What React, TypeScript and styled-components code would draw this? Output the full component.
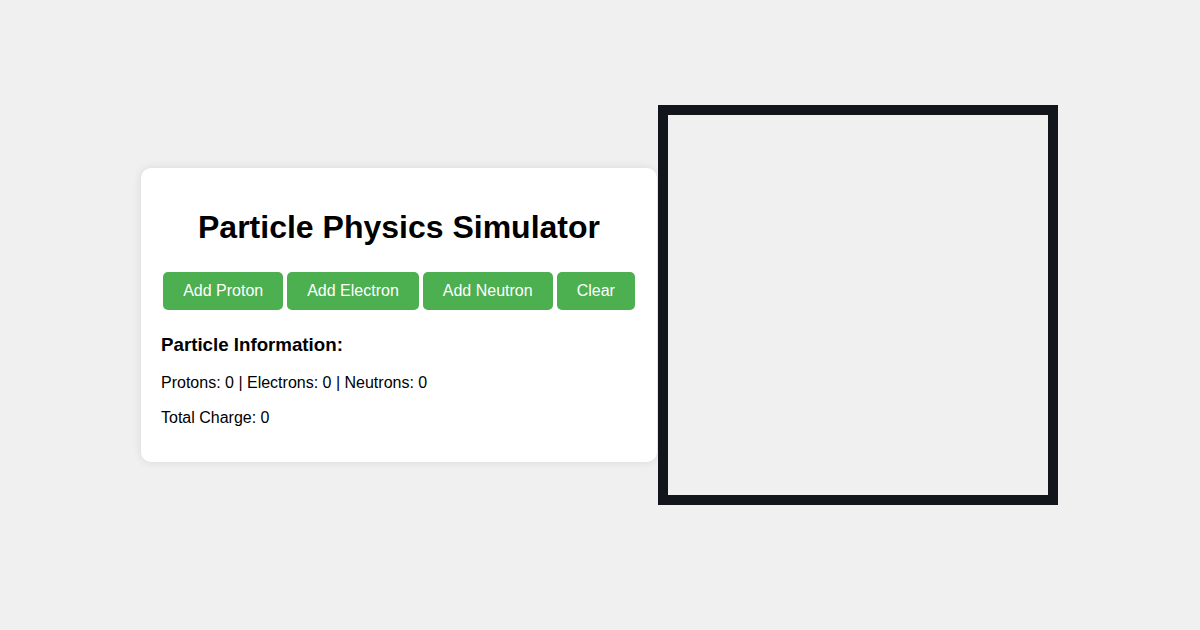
import React from "react";
import styled, { createGlobalStyle } from "styled-components";

const Global = createGlobalStyle`
  html, body { margin: 0; padding: 0; }
  body {
    background: #f0f0f0;
    font-family: "Liberation Sans", Arial, sans-serif;
    color: #000;
  }
`;

const Page = styled.div`
  box-sizing: border-box;
  display: flex;
  justify-content: center;
  align-items: center;
  height: 630px;
  width: 1200px;
  padding-right: 1px;
`;

const Card = styled.div`
  box-sizing: border-box;
  width: 516px;
  padding: 20px 20px 19px;
  background: #fff;
  border-radius: 10px;
  box-shadow: 0 0 10px rgba(0, 0, 0, 0.1);
`;

const Title = styled.h1`
  margin: 21.44px 0;
  font-size: 32px;
  font-weight: bold;
  text-align: center;
`;

const Controls = styled.div`
  display: flex;
  justify-content: center;
  gap: 4px;
  padding: 4px 0;
`;

const Button = styled.button`
  background: #4caf50;
  color: #fff;
  border: none;
  border-radius: 5px;
  padding: 10px 20px;
  font-family: "Liberation Sans", Arial, sans-serif;
  font-size: 16px;
  line-height: 18px;
  cursor: pointer;
`;

const SubTitle = styled.h3`
  margin: 19.72px 0 18.72px;
  font-size: 18.72px;
  font-weight: bold;
`;

const Info = styled.p`
  margin: 16px 0;
  font-size: 16px;
  line-height: 18.4px;
`;

const Canvas = styled.canvas`
  display: block;
  box-sizing: border-box;
  width: 400px;
  height: 400px;
  border: 10px solid #13151d;
  margin-left: 1px;
  margin-bottom: 20px;
`;

export default function App() {
  return (
    <>
      <Global />
      <Page>
        <Card>
          <Title>Particle Physics Simulator</Title>
          <Controls>
            <Button>Add Proton</Button>
            <Button>Add Electron</Button>
            <Button>Add Neutron</Button>
            <Button>Clear</Button>
          </Controls>
          <SubTitle>Particle Information:</SubTitle>
          <Info>Protons: 0 | Electrons: 0 | Neutrons: 0</Info>
          <Info>Total Charge: 0</Info>
        </Card>
        <Canvas width={380} height={380} />
      </Page>
    </>
  );
}
